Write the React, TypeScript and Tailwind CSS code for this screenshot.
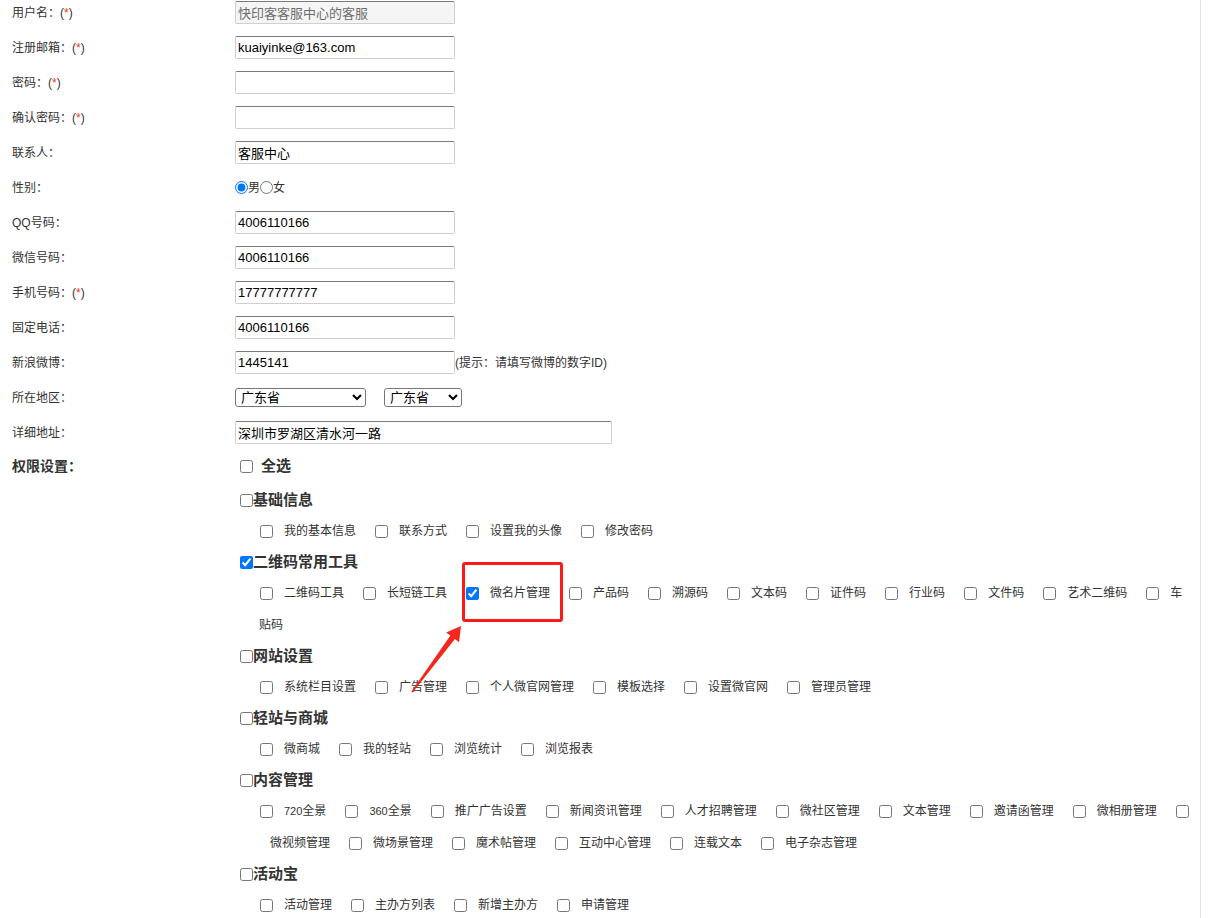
import React from 'react';

type Row = {
  label: string;
  req?: boolean;
  value?: string;
  readOnly?: boolean;
  password?: boolean;
  tip?: string;
};

const rows: Row[] = [
  { label: '用户名：', req: true, value: '快印客客服中心的客服', readOnly: true },
  { label: '注册邮箱：', req: true, value: 'kuaiyinke@163.com' },
  { label: '密码：', req: true, value: '', password: true },
  { label: '确认密码：', req: true, value: '', password: true },
  { label: '联系人：', value: '客服中心' },
];

const rows2: Row[] = [
  { label: 'QQ号码：', value: '4006110166' },
  { label: '微信号码：', value: '4006110166' },
  { label: '手机号码：', req: true, value: '17777777777' },
  { label: '固定电话：', value: '4006110166' },
  { label: '新浪微博：', value: '1445141', tip: '(提示：请填写微博的数字ID)' },
];

type Group = { title: string; checked?: boolean; items: string[] };

const groups: Group[] = [
  { title: '基础信息', items: ['我的基本信息', '联系方式', '设置我的头像', '修改密码'] },
  {
    title: '二维码常用工具',
    checked: true,
    items: ['二维码工具', '长短链工具', '微名片管理', '产品码', '溯源码', '文本码', '证件码', '行业码', '文件码', '艺术二维码', '车贴码'],
  },
  { title: '网站设置', items: ['系统栏目设置', '广告管理', '个人微官网管理', '模板选择', '设置微官网', '管理员管理'] },
  { title: '轻站与商城', items: ['微商城', '我的轻站', '浏览统计', '浏览报表'] },
  {
    title: '内容管理',
    items: [
      '720全景', '360全景', '推广广告设置', '新闻资讯管理', '人才招聘管理', '微社区管理', '文本管理', '邀请函管理',
      '微相册管理', '微视频管理', '微场景管理', '魔术帖管理', '互动中心管理', '连载文本', '电子杂志管理',
    ],
  },
  { title: '活动宝', items: ['活动管理', '主办方列表', '新增主办方', '申请管理'] },
];

function Label({ text, req }: { text: string; req?: boolean }) {
  return (
    <div className="w-[235px] shrink-0 pl-3 text-[12px] text-[#333]">
      {text}
      {req && (
        <>
          (<span className="text-[#f30]">*</span>)
        </>
      )}
    </div>
  );
}

function TextInput({ row, width = 'w-[220px]' }: { row: Row; width?: string }) {
  return (
    <input
      type={row.password ? 'password' : 'text'}
      defaultValue={row.value}
      readOnly={row.readOnly}
      className={`h-[23px] ${width} rounded-[2px] border border-[#cfcfcf] border-t-[#7a7a7a] px-[2px] text-[13px] outline-none ${
        row.readOnly ? 'bg-[#f5f5f5] text-[#6d6d6d]' : 'bg-white text-black'
      }`}
    />
  );
}

function FieldRow({ row }: { row: Row }) {
  return (
    <div className="flex h-[35px] items-center">
      <Label text={row.label} req={row.req} />
      <TextInput row={row} />
      {row.tip && <span className="text-[12px] text-[#333]">{row.tip}</span>}
    </div>
  );
}

function ItemText({ text }: { text: string }) {
  const m = text.match(/^(\d+)(.*)$/);
  if (!m) return <>{text}</>;
  return (
    <>
      <span className="text-[11px]">{m[1]}</span>
      {m[2]}
    </>
  );
}

export default function App() {
  return (
    <div className="relative flex h-[918px] w-[1201px] flex-col overflow-hidden border-r border-[#e3e3e3] bg-white font-['Liberation_Sans','Noto_Sans_CJK_SC',sans-serif] text-[#333]">
      <div className="-mt-[5px]">
        {rows.map((r) => (
          <FieldRow key={r.label} row={r} />
        ))}

        <div className="flex h-[35px] items-center">
          <Label text="性别：" />
          <label className="flex items-center text-[12px]">
            <input type="radio" name="sex" defaultChecked className="m-0 h-[13px] w-[13px]" />男
          </label>
          <label className="flex items-center text-[12px]">
            <input type="radio" name="sex" className="m-0 h-[13px] w-[13px]" />女
          </label>
        </div>

        {rows2.map((r) => (
          <FieldRow key={r.label} row={r} />
        ))}

        <div className="flex h-[35px] items-center">
          <Label text="所在地区：" />
          <select className="h-[19px] w-[131px] rounded-[3px] border border-[#767676] bg-white pl-[1px] text-[13px] text-black">
            <option>广东省</option>
          </select>
          <select className="ml-[18px] h-[19px] w-[78px] rounded-[3px] border border-[#767676] bg-white pl-[1px] text-[13px] text-black">
            <option>广东省</option>
          </select>
        </div>

        <div className="flex h-[35px] items-center">
          <Label text="详细地址：" />
          <TextInput row={{ label: '详细地址：', value: '深圳市罗湖区清水河一路' }} width="w-[377px]" />
        </div>

        <div className="flex">
          <div className="flex h-[33px] w-[235px] shrink-0 items-center pl-3 text-[14px] font-bold text-[#333]">
            权限设置：
          </div>
          <div className="pl-[5px]">
            <label className="flex h-[35px] items-center pb-[2px] text-[15px] font-bold">
              <input type="checkbox" className="m-0 h-[13px] w-[13px]" />
              <span className="ml-2">全选</span>
            </label>
            {groups.map((g) => (
              <div key={g.title}>
                <label className="flex h-[30px] items-center text-[15px] font-bold text-[#333]">
                  <input type="checkbox" defaultChecked={g.checked} className="m-0 h-[13px] w-[13px]" />
                  {g.title}
                </label>
                <div className="ml-[19px] w-[934px] text-[12px] leading-[32px] text-[#333]">
                  {g.items.map((it) => (
                    <label key={it} className="inline">
                      <input
                        type="checkbox"
                        defaultChecked={it === '微名片管理'}
                        className="m-0 ml-[1px] h-[13px] w-[13px] align-middle"
                      />
                      <span className="mr-[18px] pl-[11px]">
                        <ItemText text={it} />
                      </span>
                    </label>
                  ))}
                </div>
              </div>
            ))}
          </div>
        </div>
      </div>

      {/* annotation: red box + arrow */}
      <div className="pointer-events-none absolute left-[462px] top-[562px] h-[60px] w-[101px] rounded-[3px] border-[3px] border-[#ff1a1a]" />
      <svg
        className="pointer-events-none absolute left-[400px] top-[620px]"
        width="70"
        height="80"
        viewBox="400 620 70 80"
      >
        <polygon
          points="461,626 459,642.2 454.9,639 412.6,692.4 411.4,691.6 450.4,635.6 446.2,632.5"
          fill="#f5261b"
        />
      </svg>
    </div>
  );
}
